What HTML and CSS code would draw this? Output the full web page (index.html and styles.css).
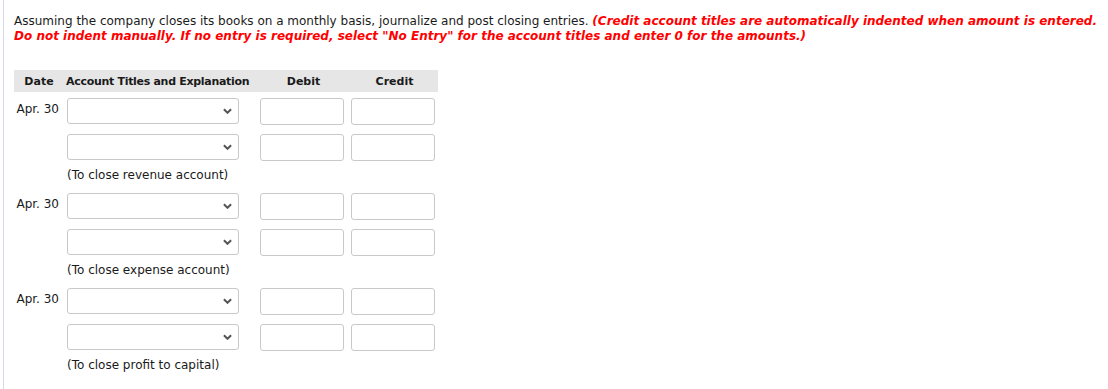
FILE: index.html
```html
<!DOCTYPE html>
<html>
<head>
<meta charset="utf-8">
<link rel="stylesheet" href="styles.css">
</head>
<body>
<div class="page">
  <p class="instr">Assuming the company closes its books on a monthly basis, journalize and post closing entries. <em class="note">(Credit account titles are automatically indented when amount is entered.</em><br><em class="note">Do not indent manually. If no entry is required, select "No Entry" for the account titles and enter 0 for the amounts.)</em></p>

  <div class="journal">
    <div class="head">
      <div class="c-date">Date</div>
      <div class="c-acct">Account Titles and Explanation</div>
      <div class="c-num">Debit</div>
      <div class="c-num">Credit</div>
    </div>

    <div class="group first">
      <div class="row">
        <div class="c-date date">Apr. 30</div>
        <div class="c-acct"><div class="sel"><svg class="chev" viewBox="0 0 10 6"><path d="M1 1 L5 5 L9 1" /></svg></div></div>
        <div class="c-num"><div class="inp"></div></div>
        <div class="c-num"><div class="inp"></div></div>
      </div>
      <div class="row">
        <div class="c-date date"></div>
        <div class="c-acct"><div class="sel"><svg class="chev" viewBox="0 0 10 6"><path d="M1 1 L5 5 L9 1" /></svg></div></div>
        <div class="c-num"><div class="inp"></div></div>
        <div class="c-num"><div class="inp"></div></div>
      </div>
      <div class="expl">(To close revenue account)</div>
    </div>

    <div class="group">
      <div class="row">
        <div class="c-date date">Apr. 30</div>
        <div class="c-acct"><div class="sel"><svg class="chev" viewBox="0 0 10 6"><path d="M1 1 L5 5 L9 1" /></svg></div></div>
        <div class="c-num"><div class="inp"></div></div>
        <div class="c-num"><div class="inp"></div></div>
      </div>
      <div class="row">
        <div class="c-date date"></div>
        <div class="c-acct"><div class="sel"><svg class="chev" viewBox="0 0 10 6"><path d="M1 1 L5 5 L9 1" /></svg></div></div>
        <div class="c-num"><div class="inp"></div></div>
        <div class="c-num"><div class="inp"></div></div>
      </div>
      <div class="expl">(To close expense account)</div>
    </div>

    <div class="group">
      <div class="row">
        <div class="c-date date">Apr. 30</div>
        <div class="c-acct"><div class="sel"><svg class="chev" viewBox="0 0 10 6"><path d="M1 1 L5 5 L9 1" /></svg></div></div>
        <div class="c-num"><div class="inp"></div></div>
        <div class="c-num"><div class="inp"></div></div>
      </div>
      <div class="row">
        <div class="c-date date"></div>
        <div class="c-acct"><div class="sel"><svg class="chev" viewBox="0 0 10 6"><path d="M1 1 L5 5 L9 1" /></svg></div></div>
        <div class="c-num"><div class="inp"></div></div>
        <div class="c-num"><div class="inp"></div></div>
      </div>
      <div class="expl">(To close profit to capital)</div>
    </div>
  </div>
</div>
</body>
</html>
```

FILE: styles.css
```css
html, body {
  margin: 0;
  padding: 0;
  background: #fff;
}
body {
  font-family: "DejaVu Sans", Verdana, sans-serif;
  color: #1a1a1a;
}
.page {
  margin-left: 3px;
  border-left: 1px solid #d3dbe8;
  min-height: 389px;
  padding: 14px 0 0 10px;
  box-sizing: border-box;
}
.instr {
  margin: 0;
  font-size: 12px;
  line-height: 15px;
  white-space: nowrap;
}
.note {
  color: #ff0000;
  font-weight: bold;
}
.journal {
  margin-top: 26px;
  width: 424px;
  font-size: 12px;
}
.head {
  display: grid;
  grid-template-columns: 50px 192px 91px 91px;
  height: 22px;
  align-items: center;
  background: #e6e6e6;
  font-weight: bold;
  font-size: 11px;
  white-space: nowrap;
}
.head .c-date {
  text-align: center;
}
.head .c-acct {
  padding-left: 2px;
  letter-spacing: -0.3px;
}
.head .c-num {
  text-align: center;
}
.group {
  display: flex;
  flex-direction: column;
}
.row {
  display: grid;
  grid-template-columns: 50px 192px 91px 91px;
  margin-top: 10px;
  height: 26px;
}
.group.first .row:first-child {
  margin-top: 6px;
}
.date {
  text-align: right;
  padding-right: 5px;
  padding-top: 4px;
  font-size: 12px;
}
.c-acct {
  padding-left: 3px;
}
.c-num {
  padding-left: 4px;
}
.sel {
  width: 172px;
  height: 26px;
  box-sizing: border-box;
  border: 1px solid #c9c9c9;
  border-radius: 3px;
  display: flex;
  align-items: center;
  justify-content: flex-end;
  padding-right: 6px;
}
.chev {
  width: 9px;
  height: 6px;
  fill: none;
  stroke: #555;
  stroke-width: 2.2;
}
.inp {
  width: 84px;
  height: 27px;
  box-sizing: border-box;
  border: 1px solid #c9c9c9;
  border-radius: 3px;
}
.expl {
  margin-top: 8px;
  margin-left: 53px;
  height: 15px;
  line-height: 15px;
  font-size: 12px;
}
```
